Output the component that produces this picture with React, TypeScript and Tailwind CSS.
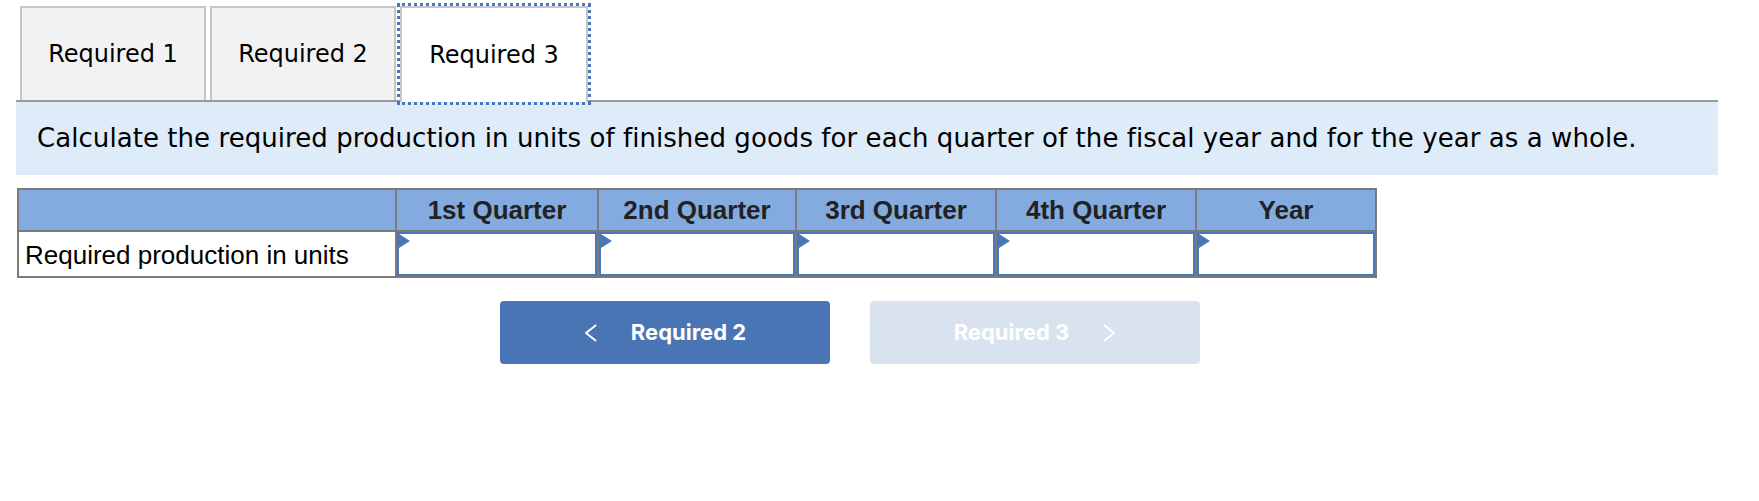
import React from 'react';

const verdana = { fontFamily: '"DejaVu Sans", Verdana, sans-serif' };
const arial = { fontFamily: '"Liberation Sans", Arial, sans-serif' };
const btnFont = { fontFamily: 'Inter, Roboto, sans-serif' };

const columns = [
  { label: '1st Quarter', w: 'w-[202px]' },
  { label: '2nd Quarter', w: 'w-[198px]' },
  { label: '3rd Quarter', w: 'w-[200px]' },
  { label: '4th Quarter', w: 'w-[200px]' },
  { label: 'Year', w: 'w-[180px]' },
];

const Tab = ({ label, active }: { label: string; active?: boolean }) => {
  if (active) {
    return (
      <div className="relative z-10 -mb-[2px] flex h-[96px] w-[188px] items-center justify-center border-2 border-b-0 border-[#c6c6c6] bg-white text-[24px] text-black outline-[3px] outline-dotted outline-[#4a76c0]">
        {label}
      </div>
    );
  }
  return (
    <div className="flex h-[94px] w-[186px] items-center justify-center border-2 border-b-0 border-[#c6c6c6] bg-[#f2f2f2] text-[24px] text-black">
      {label}
    </div>
  );
};

const InputCell = ({ w }: { w: string }) => (
  <div className={`${w} border-l-2 border-[#7a7a7a]`}>
    <div className="relative h-full w-full border-2 border-[#4a77b6] bg-white">
      <span className="absolute left-0 top-0 h-0 w-0 border-y-[7px] border-l-[11px] border-y-transparent border-l-[#4a77b6]" />
    </div>
  </div>
);

const Chevron = ({ dir }: { dir: 'left' | 'right' }) => (
  <svg width="13" height="18" viewBox="0 0 13 18" fill="none">
    <polyline
      points={dir === 'left' ? '11.5,1.5 2,9 11.5,16.5' : '1.5,1.5 11,9 1.5,16.5'}
      stroke="white"
      strokeWidth="2"
      strokeLinecap="round"
      strokeLinejoin="round"
    />
  </svg>
);

export default function App() {
  return (
    <div className="min-h-[501px] w-[1759px] bg-white pl-4 pt-[6px]">
      <div className="w-[1702px]" style={verdana}>
        <div className="flex items-end gap-1 border-b-2 border-[#999999] pl-1">
          <Tab label="Required 1" />
          <Tab label="Required 2" />
          <Tab label="Required 3" active />
        </div>
        <div className="flex h-[73px] items-center bg-[#deebf8] pl-[21px] text-[26px] tracking-[0.06px] text-black">
          Calculate the required production in units of finished goods for each quarter of the fiscal year and for the year as a whole.
        </div>
      </div>

      <div className="ml-px mt-[13px] w-[1360px] border-2 border-[#7a7a7a]" style={arial}>
        <div className="flex h-[42px] border-b-2 border-[#7a7a7a] bg-[#84abdf]">
          <div className="w-[376px]" />
          {columns.map((c) => (
            <div
              key={c.label}
              className={`${c.w} flex items-center justify-center border-l-2 border-[#7a7a7a] text-[26px] font-bold text-[#222]`}
            >
              {c.label}
            </div>
          ))}
        </div>
        <div className="flex h-[44px]">
          <div className="flex w-[376px] items-center pl-[6px] pt-[3px] text-[26px] text-black">
            Required production in units
          </div>
          {columns.map((c) => (
            <InputCell key={c.label} w={c.w} />
          ))}
        </div>
      </div>

      <div className="mt-[23px] flex gap-10 pl-[484px]" style={btnFont}>
        <button className="flex h-[63px] w-[330px] items-center justify-center gap-[34px] rounded-[4px] bg-[#4a75b4] text-[22px] font-bold text-white">
          <Chevron dir="left" />
          <span>Required 2</span>
        </button>
        <button className="flex h-[63px] w-[330px] items-center justify-center gap-[34px] rounded-[4px] bg-[#d9e3ef] text-[22px] font-bold text-white">
          <span>Required 3</span>
          <Chevron dir="right" />
        </button>
      </div>
    </div>
  );
}
